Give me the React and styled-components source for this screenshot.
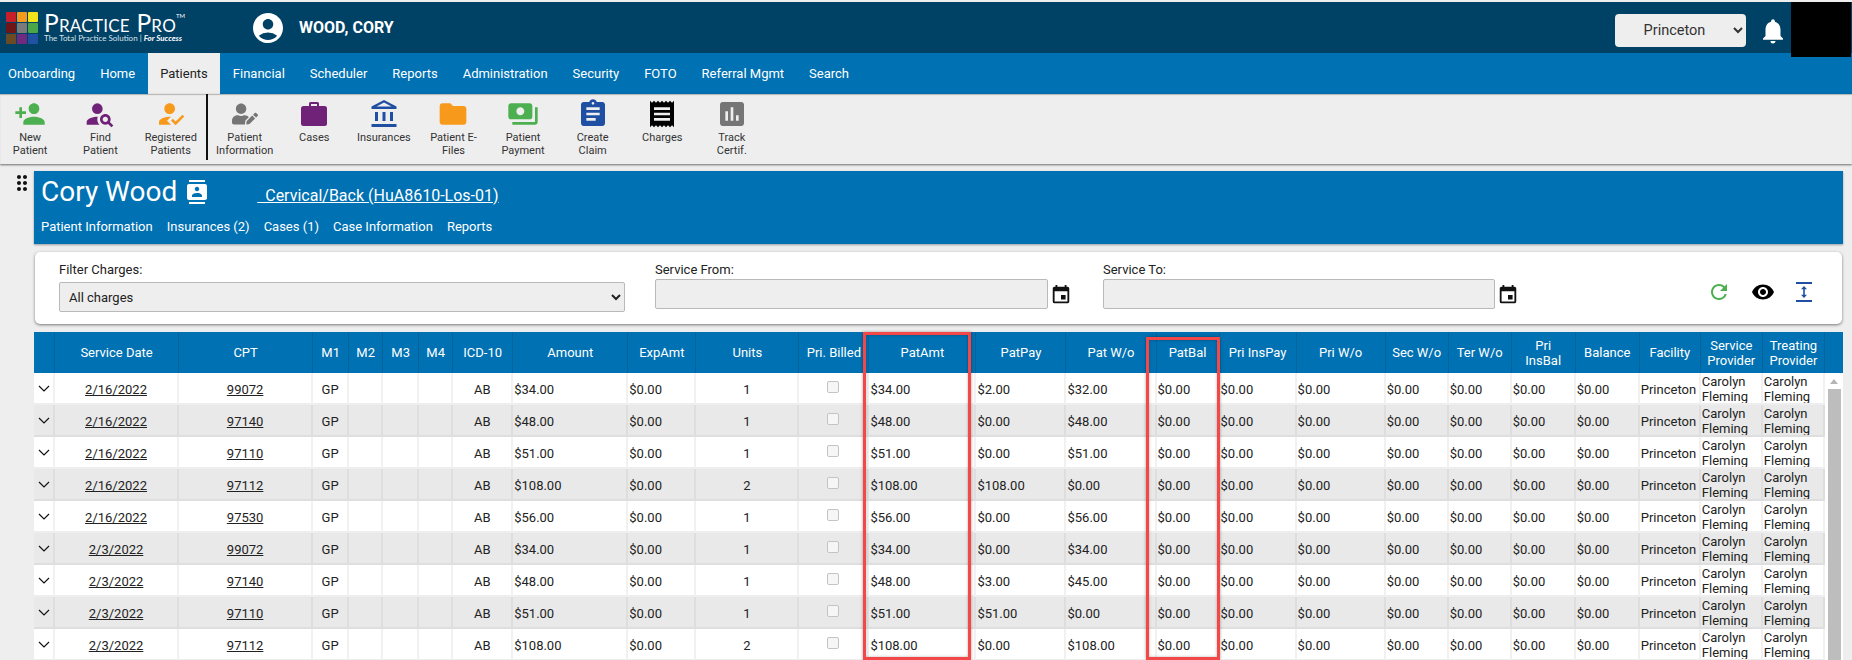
import React from "react";
import styled, { createGlobalStyle } from "styled-components";
import {
  MdPersonAdd, MdPersonSearch, MdHowToReg, MdFolder, MdPayments, MdAssignment, MdReceipt,
  MdAssessment, MdContacts, MdEvent, MdRefresh, MdVisibility, MdDragIndicator, MdAccountCircle,
  MdNotifications,
} from "react-icons/md";
import { FaUserEdit } from "react-icons/fa";

const Global = createGlobalStyle`
  html, body { margin: 0; padding: 0; height: 660px; overflow: hidden; background: #eeeeee; }
  body { font-family: Roboto, "Liberation Sans", sans-serif; color: #222; }
  * { box-sizing: border-box; }
`;

const Page = styled.div`
  position: relative;
  width: 1852px;
  height: 660px;
  overflow: hidden;
  padding-top: 2px;
`;

const TopBar = styled.header`
  height: 51px;
  background: #004166;
  display: flex;
  align-items: center;
  padding-left: 6px;
`;

const Logo = styled.div`
  display: flex;
  align-items: center;
  gap: 6px;
  width: 248px;
`;

const LogoGrid = styled.div`
  display: grid;
  grid-template-columns: repeat(3, 10px);
  grid-auto-rows: 10px;
  gap: 1px;
`;

const LogoSquare = styled.span`
  background: ${(p) => p.$c};
  border-radius: 1px;
`;

const LogoText = styled.div`
  color: #fff;
  display: flex;
  flex-direction: column;
`;

const LogoName = styled.div`
  font-family: Lato, sans-serif;
  font-variant: small-caps;
  font-size: 24.5px;
  line-height: 22px;
  letter-spacing: 0.25px;
  white-space: nowrap;
  sup { font-size: 6px; line-height: 0; vertical-align: 14px; letter-spacing: 0; font-variant: normal; }
`;

const LogoTag = styled.div`
  font-family: Lato, sans-serif;
  font-size: 8px;
  line-height: 9px;
  color: #d8e2ea;
  white-space: nowrap;
  b { font-style: italic; font-weight: 700; color: #fff; }
`;

const UserName = styled.div`
  display: flex;
  align-items: center;
  gap: 17px;
  color: #fff;
  font-weight: 700;
  font-size: 16px;
  svg { margin: 0 -4px; }
`;

const TopRight = styled.div`
  margin-left: auto;
  display: flex;
  align-items: center;
  margin-right: 64px;
  gap: 12px;
  padding-top: 6px;
`;

const SiteSelect = styled.select`
  width: 131px;
  height: 33px;
  border: 0;
  border-radius: 4px;
  background: #eeeeee;
  color: #333;
  font: 14.5px Roboto, sans-serif;
  text-align: center;
`;

const Redacted = styled.div`
  position: absolute;
  top: 2px;
  left: 1791px;
  width: 60px;
  height: 55px;
  background: #000;
`;

const Nav = styled.nav`
  height: 41px;
  background: #0071b2;
  display: flex;
  align-items: stretch;
`;

const NavItem = styled.div`
  display: flex;
  align-items: center;
  padding: 0 12.5px;
  font-size: 13px;
  white-space: nowrap;
  color: ${(p) => (p.$active ? "#222" : "#fff")};
  background: ${(p) => (p.$active ? "#eeeeee" : "transparent")};
  &:first-child { padding-left: 8px; }
`;

const Toolbar = styled.div`
  height: 70px;
  display: flex;
  align-items: flex-start;
  background: #eeeeee;
  box-shadow: 0 1px 2px rgba(0, 0, 0, 0.55), inset 0 1px 1px rgba(0, 0, 0, 0.25);
  position: relative;
`;

const ToolGroup = styled.div`
  display: flex;
  margin-left: ${(p) => p.$offset}px;
`;

const ToolItem = styled.div`
  width: ${(p) => p.$w}px;
  padding-top: 4px;
  display: flex;
  flex-direction: column;
  align-items: center;
  text-align: center;
  font-size: 11px;
  line-height: 13px;
  color: #333;
`;

const ToolIcon = styled.span`
  height: 32px;
  display: flex;
  align-items: center;
  justify-content: center;
  color: ${(p) => p.$c};
  margin-bottom: 1px;
`;

const ToolLabel = styled.span`
  display: block;
  white-space: pre-line;
`;

const ToolSep = styled.div`
  width: 2px;
  height: 66px;
  background: #111;
`;

const Workspace = styled.div`
  display: flex;
  padding: 7px 9px 0 10px;
`;

const Handle = styled.div`
  width: 24px;
  flex: none;
  color: #111;
  height: 24px;
`;

const Main = styled.main`
  flex: 1;
  min-width: 0;
`;

const Banner = styled.section`
  height: 73px;
  background: #0071b2;
  color: #fff;
  padding: 0 7px;
  box-shadow: 0 1px 2px rgba(0, 0, 0, 0.35);
`;

const BannerTop = styled.div`
  display: flex;
  align-items: center;
  height: 41px;
`;

const PatientName = styled.div`
  font-size: 28px;
  line-height: 41px;
`;

const CaseLink = styled.a`
  margin-left: 48px;
  margin-top: 7px;
  font-size: 16px;
  color: #fff;
  text-decoration: underline;
  white-space: pre;
`;

const ContactIcon = styled.span`
  display: flex;
  margin-left: 8px;
  margin-top: 1px;
`;

const BannerTabs = styled.div`
  display: flex;
  gap: 14px;
  margin-top: 6px;
  font-size: 13px;
  line-height: 18px;
`;

const FilterPanel = styled.section`
  margin: 8px 1px 8px 1px;
  height: 72px;
  background: #fff;
  border-radius: 5px;
  box-shadow: 0 1px 3px rgba(0, 0, 0, 0.5);
  display: flex;
  padding: 10px 0 0 24px;
  position: relative;
`;

const Field = styled.div`
  width: ${(p) => p.$w}px;
  flex: none;
`;

const FieldLabel = styled.label`
  display: block;
  font-size: 13px;
  line-height: 16px;
  color: #222;
`;

const BigSelect = styled.select`
  display: block;
  width: 566px;
  height: 30px;
  margin-top: 4px;
  padding-left: 5px;
  background: #eeeeee;
  border: 1px solid #b9b9b9;
  border-radius: 2px;
  font: 13px Roboto, sans-serif;
  color: #222;
`;

const DateRow = styled.div`
  display: flex;
  align-items: center;
  margin-top: 1px;
  gap: 2px;
  color: #111;
`;

const DateInput = styled.input`
  width: ${(p) => p.$w}px;
  height: 30px;
  background: #eeeeee;
  border: 1px solid #b9b9b9;
  border-radius: 2px;
`;

const CalIcon = styled.span`
  display: flex;
  margin-top: 2px;
`;

const Actions = styled.div`
  position: absolute;
  top: 28px;
  left: 1672px;
  display: flex;
  align-items: center;
  gap: 20px;
`;

const ActionIcon = styled.span`
  display: flex;
  color: ${(p) => p.$c};
`;

const TableWrap = styled.div`
  position: relative;
  display: flex;
  align-items: flex-start;
`;

const Table = styled.table`
  table-layout: fixed;
  width: 1791px;
  flex: none;
  border-collapse: separate;
  border-spacing: 0;
  font-size: 13px;
`;

const Th = styled.th`
  height: 41px;
  background: #0071b2;
  color: #fff;
  font-weight: 400;
  font-size: 13px;
  line-height: 15px;
  text-align: center;
  padding: 0;
  white-space: pre-line;
  border-right: 1px solid #06629a;
`;

const Row = styled.tr`
  background: ${(p) => (p.$alt ? "#e9e9e9" : "#fff")};
`;

const Td = styled.td`
  height: 32px;
  padding: 2px 0 0 ${(p) => (p.$align === "left" ? "1px" : "0")};
  text-align: ${(p) => p.$align || "center"};
  border-right: 2px solid ${(p) => (p.$alt ? "#dedede" : "#f1f1f1")};
  border-bottom: 2px solid ${(p) => (p.$alt ? "#dedede" : "#eeeeee")};
  line-height: 15px;
  color: #222;
  overflow: hidden;
  white-space: nowrap;
`;

const ProviderCell = styled(Td)`
  white-space: normal;
  vertical-align: top;
  padding-top: 1px;
`;

const ProviderText = styled.div`
  height: 29px;
`;

const UnderLink = styled.a`
  color: #222;
  text-decoration: underline;
`;

const RowCheck = styled.span`
  display: inline-block;
  width: 12px;
  height: 12px;
  border: 1px solid #c4c4c4;
  border-radius: 2px;
  background: #f6f6f6;
  margin-bottom: 4px;
  vertical-align: middle;
`;

const Expander = styled.span`
  display: flex;
  justify-content: center;
  margin-top: -2px;
`;

const ScrollCol = styled.div`
  width: 18px;
  flex: none;
  height: 330px;
  background: #fff;
  position: relative;
`;

const ScrollHead = styled.div`
  height: 41px;
  background: #0071b2;
`;

const ScrollArrow = styled.div`
  margin: 6px auto 0;
  width: 0;
  height: 0;
  border-left: 4px solid transparent;
  border-right: 4px solid transparent;
  border-bottom: 5px solid #b5b5b5;
`;

const ScrollThumb = styled.div`
  margin: 5px auto 0 3px;
  width: 13px;
  height: 280px;
  background: #bdbdbd;
`;

const RedBox = styled.div`
  position: absolute;
  left: ${(p) => p.$x}px;
  top: ${(p) => p.$y}px;
  width: ${(p) => p.$w}px;
  height: ${(p) => p.$h}px;
  border: 3px solid #f44848;
  box-shadow: 0 0 3px rgba(0, 0, 0, 0.35), inset 0 0 3px rgba(0, 0, 0, 0.3);
  pointer-events: none;
`;

const squares = ["#c8202a", "#f39a1f", "#f4e31a", "#6e1517", "#7b7b7b", "#4aa648", "#6a4b24", "#702a80", "#1f52a3"];

const CaseIcon = () => (
  <svg width="28" height="28" viewBox="0 0 28 28" fill="#6f2277">
    <path d="M9 3.500A1.500 1.500 0 0 1 10.500 2h7A1.500 1.500 0 0 1 19 3.500V6h-2V4h-6v2H9z" />
    <rect x="1" y="6" width="26" height="20" rx="2.500" />
  </svg>
);

const BankIcon = () => (
  <svg width="28" height="30" viewBox="0 0 28 30" fill="#1f4fa3">
    <path d="M14 1 1.500 7.500V10h25V7.500zM14 3.500l7.500 4h-15z" fillRule="evenodd" />
    <rect x="5" y="13" width="3" height="9" />
    <rect x="12.500" y="13" width="3" height="9" />
    <rect x="20" y="13" width="3" height="9" />
    <rect x="1.500" y="25" width="25" height="3" />
  </svg>
);

const HeightIcon = () => (
  <svg width="18" height="22" viewBox="0 0 18 22" fill="#1f4fa3">
    <rect x="1" y="1" width="16" height="2" />
    <rect x="1" y="19" width="16" height="2" />
    <path d="M9 5l3 3.200h-2.200v5.600H12L9 17l-3-3.200h2.200V8.200H6z" />
  </svg>
);

const ThinChevron = () => (
  <svg width="12" height="7" viewBox="0 0 12 7" fill="none" stroke="#111" strokeWidth="1.200">
    <path d="M1 1l5 5 5-5" />
  </svg>
);

const tools1 = [
  { l: "New\nPatient", c: "#4caf50", i: <MdPersonAdd size={32} /> },
  { l: "Find\nPatient", c: "#6f2277", i: <MdPersonSearch size={32} /> },
  { l: "Registered\nPatients", c: "#f79a1c", i: <MdHowToReg size={32} /> },
];

const tools2 = [
  { l: "Patient\nInformation", c: "#757575", i: <FaUserEdit size={26} /> },
  { l: "Cases", c: "#6f2277", i: <CaseIcon /> },
  { l: "Insurances", c: "#1f4fa3", i: <BankIcon /> },
  { l: "Patient E-\nFiles", c: "#f79a1c", i: <MdFolder size={32} /> },
  { l: "Patient\nPayment", c: "#4caf50", i: <MdPayments size={32} /> },
  { l: "Create\nClaim", c: "#1f4fa3", i: <MdAssignment size={32} /> },
  { l: "Charges", c: "#000", i: <MdReceipt size={32} /> },
  { l: "Track\nCertif.", c: "#757575", i: <MdAssessment size={32} /> },
];

const cols = [
  ["", 21], ["Service Date", 124], ["CPT", 134], ["M1", 36], ["M2", 34], ["M3", 36], ["M4", 34], ["ICD-10", 60],
  ["Amount", 115], ["ExpAmt", 68], ["Units", 103], ["Pri. Billed", 70], ["PatAmt", 107], ["PatPay", 90],
  ["Pat W/o", 90], ["PatBal", 63], ["Pri InsPay", 77], ["Pri W/o", 89], ["Sec W/o", 63], ["Ter W/o", 63],
  ["Pri\nInsBal", 64], ["Balance", 64], ["Facility", 61], ["Service\nProvider", 62], ["Treating\nProvider", 62],
];

const rows = [
  ["2/16/2022", "99072", 34, 1, 34, 2, 32],
  ["2/16/2022", "97140", 48, 1, 48, 0, 48],
  ["2/16/2022", "97110", 51, 1, 51, 0, 51],
  ["2/16/2022", "97112", 108, 2, 108, 108, 0],
  ["2/16/2022", "97530", 56, 1, 56, 0, 56],
  ["2/3/2022", "99072", 34, 1, 34, 0, 34],
  ["2/3/2022", "97140", 48, 1, 48, 3, 45],
  ["2/3/2022", "97110", 51, 1, 51, 51, 0],
  ["2/3/2022", "97112", 108, 2, 108, 0, 108],
];

const money = (n) => `$${n.toFixed(2)}`;

const DataRow = ({ r, alt }) => {
  const [date, cpt, amt, units, patAmt, patPay, patWo] = r;
  const C = (p) => <Td $alt={alt} {...p} />;
  const M = (p) => <Td $alt={alt} $align="left" {...p} />;
  return (
    <Row $alt={alt}>
      <C><Expander><ThinChevron /></Expander></C>
      <C><UnderLink>{date}</UnderLink></C>
      <C><UnderLink>{cpt}</UnderLink></C>
      <C>GP</C><C /><C /><C /><C>AB</C>
      <M>{money(amt)}</M>
      <M>$0.00</M>
      <C>{units}</C>
      <C><RowCheck /></C>
      <M>{money(patAmt)}</M>
      <M>{money(patPay)}</M>
      <M>{money(patWo)}</M>
      <M>$0.00</M><M>$0.00</M><M>$0.00</M><M>$0.00</M><M>$0.00</M><M>$0.00</M><M>$0.00</M>
      <M>Princeton</M>
      <ProviderCell $alt={alt} $align="left"><ProviderText>Carolyn Fleming</ProviderText></ProviderCell>
      <ProviderCell $alt={alt} $align="left"><ProviderText>Carolyn Fleming</ProviderText></ProviderCell>
    </Row>
  );
};

export default function App() {
  return (
    <Page>
      <Global />
      <TopBar>
        <Logo>
          <LogoGrid>{squares.map((c) => <LogoSquare key={c} $c={c} />)}</LogoGrid>
          <LogoText>
            <LogoName>Practice Pro<sup>TM</sup></LogoName>
            <LogoTag>The Total Practice Solution | <b>For Success</b></LogoTag>
          </LogoText>
        </Logo>
        <UserName><MdAccountCircle size={36} />WOOD, CORY</UserName>
        <TopRight>
          <SiteSelect defaultValue="Princeton"><option>Princeton</option></SiteSelect>
          <MdNotifications size={30} color="#fff" />
        </TopRight>
      </TopBar>
      <Redacted />
      <Nav>
        {["Onboarding", "Home", "Patients", "Financial", "Scheduler", "Reports", "Administration", "Security", "FOTO", "Referral Mgmt", "Search"].map((n) => (
          <NavItem key={n} $active={n === "Patients"}>{n}</NavItem>
        ))}
      </Nav>
      <Toolbar>
        <ToolGroup $offset={-5}>
          {tools1.map((t) => (
            <ToolItem key={t.l} $w={70.3}>
              <ToolIcon $c={t.c}>{t.i}</ToolIcon>
              <ToolLabel>{t.l}</ToolLabel>
            </ToolItem>
          ))}
        </ToolGroup>
        <ToolSep />
        <ToolGroup $offset={2}>
          {tools2.map((t) => (
            <ToolItem key={t.l} $w={69.6}>
              <ToolIcon $c={t.c}>{t.i}</ToolIcon>
              <ToolLabel>{t.l}</ToolLabel>
            </ToolItem>
          ))}
        </ToolGroup>
      </Toolbar>
      <Workspace>
        <Handle><MdDragIndicator size={24} /></Handle>
        <Main>
          <Banner>
            <BannerTop>
              <PatientName>Cory Wood</PatientName>
              <ContactIcon><MdContacts size={24} /></ContactIcon>
              <CaseLink>{"  Cervical/Back (HuA8610-Los-01)"}</CaseLink>
            </BannerTop>
            <BannerTabs>
              <span>Patient Information</span>
              <span>Insurances (2)</span>
              <span>Cases (1)</span>
              <span>Case Information</span>
              <span>Reports</span>
            </BannerTabs>
          </Banner>
          <FilterPanel>
            <Field $w={596}>
              <FieldLabel>Filter Charges:</FieldLabel>
              <BigSelect defaultValue="All charges"><option>All charges</option></BigSelect>
            </Field>
            <Field $w={448}>
              <FieldLabel>Service From:</FieldLabel>
              <DateRow>
                <DateInput $w={393} readOnly />
                <CalIcon><MdEvent size={22} /></CalIcon>
              </DateRow>
            </Field>
            <Field $w={424}>
              <FieldLabel>Service To:</FieldLabel>
              <DateRow>
                <DateInput $w={392} readOnly />
                <CalIcon><MdEvent size={22} /></CalIcon>
              </DateRow>
            </Field>
            <Actions>
              <ActionIcon $c="#4caf50"><MdRefresh size={24} /></ActionIcon>
              <ActionIcon $c="#000"><MdVisibility size={24} /></ActionIcon>
              <ActionIcon $c="#1f4fa3"><HeightIcon /></ActionIcon>
            </Actions>
          </FilterPanel>
          <TableWrap>
            <Table>
              <colgroup>{cols.map(([n, w], i) => <col key={i} style={{ width: w }} />)}</colgroup>
              <thead>
                <tr>{cols.map(([n], i) => <Th key={i}>{n}</Th>)}</tr>
              </thead>
              <tbody>
                {rows.map((r, i) => <DataRow key={i} r={r} alt={i % 2 === 1} />)}
              </tbody>
            </Table>
            <ScrollCol>
              <ScrollHead />
              <ScrollArrow />
              <ScrollThumb />
            </ScrollCol>
            <RedBox $x={829} $y={0} $w={108} $h={328} />
            <RedBox $x={1112} $y={5} $w={74} $h={323} />
          </TableWrap>
        </Main>
      </Workspace>
    </Page>
  );
}
